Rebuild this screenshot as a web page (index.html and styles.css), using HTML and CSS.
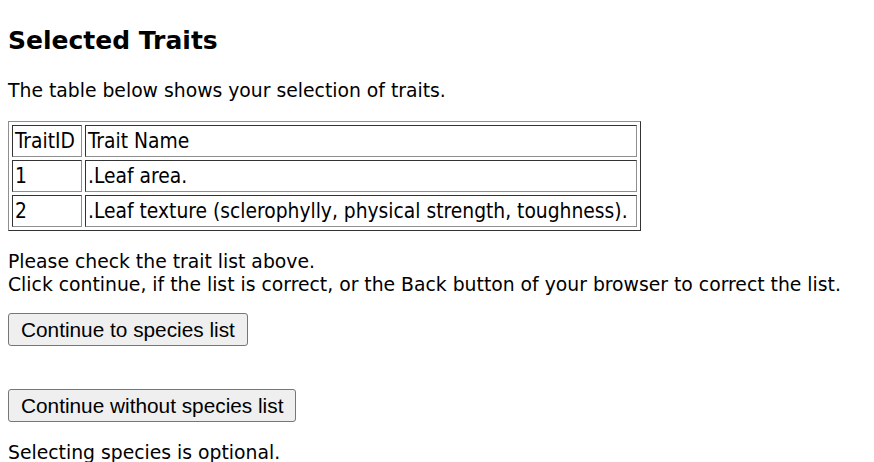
FILE: index.html
```html
<!DOCTYPE html>
<html>
<head>
<meta charset="utf-8">
<link rel="stylesheet" href="styles.css">
</head>
<body>
<h2 class="title">Selected Traits</h2>
<p class="intro">The table below shows your selection of traits.</p>
<table class="traits">
<tr><td class="id">TraitID</td><td class="name">Trait Name</td></tr>
<tr><td class="id">1</td><td class="name">.Leaf area.</td></tr>
<tr><td class="id">2</td><td class="name">.Leaf texture (sclerophylly, physical strength, toughness).</td></tr>
</table>
<p class="check">Please check the trait list above.<br>Click continue, if the list is correct, or the Back button of your browser to correct the list.</p>
<div class="actions">
<button class="btn">Continue to species list</button>
<button class="btn">Continue without species list</button>
</div>
<p class="note">Selecting species is optional.</p>
</body>
</html>
```
FILE: styles.css
```css
html, body {
  margin: 0;
  background: #fff;
}
body {
  padding: 8px;
  font-family: "DejaVu Sans", Verdana, sans-serif;
  font-size: 18.8px;
  line-height: 23px;
  color: #000;
}
.title {
  font-size: 25px;
  font-weight: bold;
  margin: 19px 0 24px;
  line-height: 28px;
}
.intro {
  margin: 0 0 19px;
}
.traits {
  width: 633px;
  border: 1px solid;
  border-color: #8f8f8f #333 #333 #8f8f8f;
  border-spacing: 3px;
  font-family: "DejaVu Sans Condensed", "DejaVu Sans", sans-serif;
  font-size: 20.8px;
}
.traits td {
  border: 1px solid;
  border-color: #333 #8f8f8f #8f8f8f #333;
  padding: 1px 2px;
  line-height: 28px;
  white-space: nowrap;
}
.traits .id {
  width: 64px;
}
.check {
  margin: 19px 0 17px;
}
.actions {
  display: flex;
  flex-direction: column;
  align-items: flex-start;
  gap: 43px;
}
.btn {
  font-family: "Liberation Sans", Arial, sans-serif;
  font-size: 20.8px;
  height: 33px;
  padding: 0 12px;
  background: #efefef;
  border: 1px solid #767676;
  border-radius: 3px;
  color: #000;
}
.note {
  margin: 19px 0 0;
}
```
